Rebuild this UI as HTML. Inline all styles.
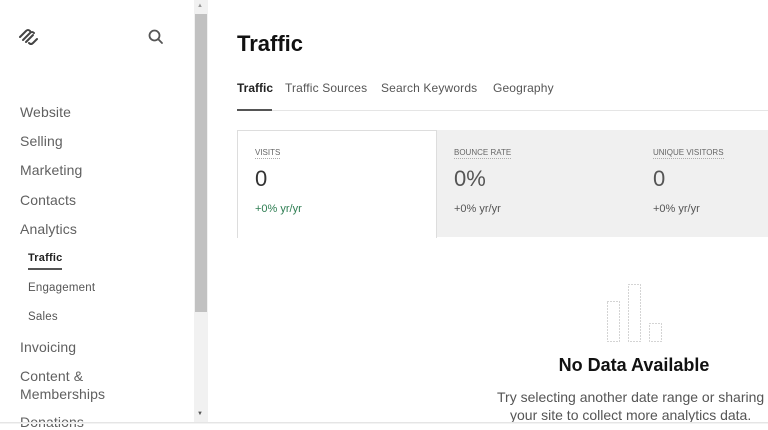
<!DOCTYPE html>
<html><head><meta charset="utf-8"><style>
*{margin:0;padding:0;box-sizing:border-box}
body{width:768px;height:424px;overflow:hidden;background:#fff;font-family:"Liberation Sans",sans-serif;position:relative}
.a{position:absolute;white-space:nowrap}
.nav{left:20px;font-size:14px;color:#606060;letter-spacing:0.1px}
.sub{left:28px;font-size:11.5px;color:#555;letter-spacing:0.2px}
.lbl{font-size:8px;color:#666;border-bottom:1px dotted #aaa;padding-bottom:1px}
.val{font-size:22px;color:#555}
.yy{font-size:11px;color:#555}
.tab{top:81px;font-size:12px;color:#555;letter-spacing:0.15px}
</style></head><body>
<svg class="a" style="left:18px;top:28px" width="22" height="18" viewBox="0 0 22 18"><g fill="none" stroke="#444" stroke-width="2" stroke-linecap="round"><path d="M2 9 L8 3 Q10 1 12 3"/><path d="M5 12 L12 5 Q14 3 16 5"/><path d="M8 14 L15 7"/><path d="M11 15 Q13 17 15 15 L19 11"/></g></svg>
<svg class="a" style="left:148px;top:29px" width="16" height="16" viewBox="0 0 16 16"><circle cx="6.5" cy="6.5" r="5" fill="none" stroke="#555" stroke-width="1.8"/><path d="M10.3 10.3 L14 14" stroke="#555" stroke-width="1.8" stroke-linecap="round"/></svg>
<div class="a nav" style="top:104px">Website</div>
<div class="a nav" style="top:133px">Selling</div>
<div class="a nav" style="top:162px">Marketing</div>
<div class="a nav" style="top:192px">Contacts</div>
<div class="a nav" style="top:221px">Analytics</div>
<div class="a sub" style="top:252px;color:#222;font-weight:bold;font-size:11px">Traffic</div>
<div class="a" style="left:28px;top:268px;width:34px;height:2px;background:#555"></div>
<div class="a sub" style="top:282px">Engagement</div>
<div class="a sub" style="top:311px">Sales</div>
<div class="a nav" style="top:339px">Invoicing</div>
<div class="a nav" style="top:368px">Content &amp;</div>
<div class="a nav" style="top:386px">Memberships</div>
<div class="a nav" style="top:414px">Donations</div>
<div class="a" style="left:194px;top:0;width:14px;height:424px;background:#f1f1f1"></div>
<div class="a" style="left:195px;top:14px;width:12px;height:298px;background:#c1c1c1"></div>
<div class="a" style="left:197px;top:3px;font-size:6px;color:#999">▲</div>
<div class="a" style="left:197px;top:411px;font-size:6px;color:#555">▼</div>
<div class="a" style="left:237px;top:31px;font-size:22px;font-weight:bold;color:#111">Traffic</div>
<div class="a tab" style="left:237px;color:#222;font-weight:bold;letter-spacing:0">Traffic</div>
<div class="a tab" style="left:285px">Traffic Sources</div>
<div class="a tab" style="left:381px">Search Keywords</div>
<div class="a tab" style="left:493px">Geography</div>
<div class="a" style="left:237px;top:110px;width:531px;height:1px;background:#e5e5e5"></div>
<div class="a" style="left:237px;top:109px;width:35px;height:2px;background:#555"></div>
<div class="a" style="left:436px;top:130px;width:332px;height:107px;background:#f0f0f0"></div>
<div class="a" style="left:237px;top:130px;width:200px;height:108px;border:1px solid #ddd;border-bottom:none;background:#fff"></div>
<div class="a lbl" style="left:255px;top:148px">VISITS</div>
<div class="a val" style="left:255px;top:166px;color:#333">0</div>
<div class="a yy" style="left:255px;top:203px;color:#2e7d52">+0% yr/yr</div>
<div class="a lbl" style="left:454px;top:148px">BOUNCE RATE</div>
<div class="a val" style="left:454px;top:166px">0%</div>
<div class="a yy" style="left:454px;top:203px">+0% yr/yr</div>
<div class="a lbl" style="left:653px;top:148px">UNIQUE VISITORS</div>
<div class="a val" style="left:653px;top:166px">0</div>
<div class="a yy" style="left:653px;top:203px">+0% yr/yr</div>
<svg class="a" style="left:606px;top:283px" width="58" height="60" viewBox="0 0 58 60"><g fill="none" stroke="#aaa" stroke-width="1" stroke-dasharray="1 2"><rect x="1.5" y="18.5" width="12" height="40"/><rect x="22.5" y="1.5" width="12" height="57"/><rect x="43.5" y="40.5" width="12" height="18"/></g></svg>
<div class="a" style="left:504px;top:355px;width:260px;text-align:center;font-size:18px;font-weight:bold;color:#111">No Data Available</div>
<div class="a" style="left:497px;top:389px;font-size:14px;color:#555">Try selecting another date range or sharing</div>
<div class="a" style="left:510px;top:407px;font-size:14px;color:#555">your site to collect more analytics data.</div>
<div class="a" style="left:0;top:422px;width:768px;height:2px;background:#f3f3f3;border-top:1px solid #e5e5e5"></div>
</body></html>
